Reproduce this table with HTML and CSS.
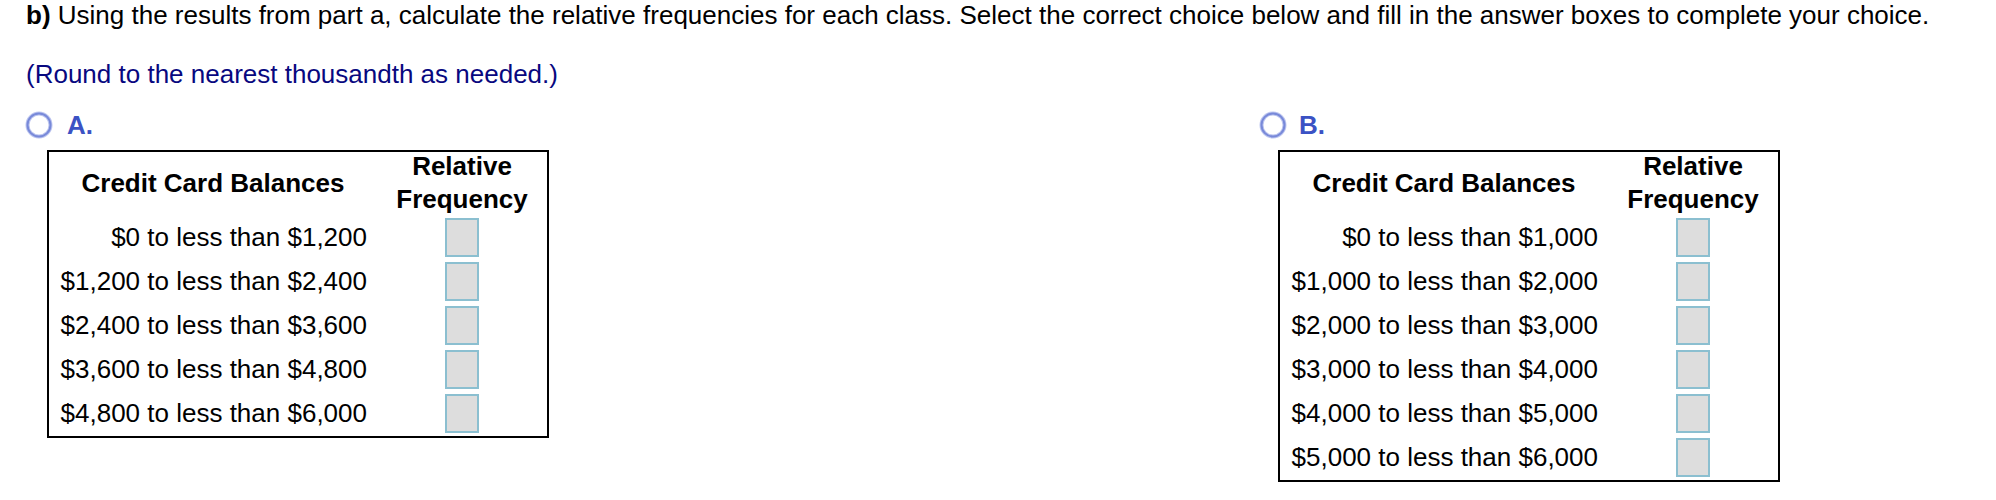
FILE: index.html
```html
<!DOCTYPE html>
<html lang="en">
<head>
<meta charset="utf-8">
<title>Relative frequencies</title>
<link rel="stylesheet" href="styles.css">
</head>
<body>
<div class="page">
  <p class="question"><b>b)</b> Using the results from part a, calculate the relative frequencies for each class. Select the correct choice below and fill in the answer boxes to complete your choice.</p>
  <p class="hint">(Round to the nearest thousandth as needed.)</p>
  <div class="choices">
    <div class="choice choice-a">
      <div class="choice-label">
        <svg class="radio" width="28" height="28" viewBox="0 0 28 28" aria-hidden="true"><circle cx="14" cy="14" r="11.5" fill="#fff" stroke="#bcc5ef" stroke-width="4"/><circle cx="14" cy="14" r="11.5" fill="none" stroke="#7889d9" stroke-width="2"/></svg>
        <span class="letter">A.</span>
      </div>
      <div class="freq-table">
        <div class="hcell hcell-left">Credit Card Balances</div>
        <div class="hcell hcell-right">Relative<br>Frequency</div>
        <div class="cls">$0 to less than $1,200</div><div class="ans"><span class="box"></span></div>
        <div class="cls">$1,200 to less than $2,400</div><div class="ans"><span class="box"></span></div>
        <div class="cls">$2,400 to less than $3,600</div><div class="ans"><span class="box"></span></div>
        <div class="cls">$3,600 to less than $4,800</div><div class="ans"><span class="box"></span></div>
        <div class="cls">$4,800 to less than $6,000</div><div class="ans"><span class="box"></span></div>
      </div>
    </div>
    <div class="choice choice-b">
      <div class="choice-label">
        <svg class="radio" width="28" height="28" viewBox="0 0 28 28" aria-hidden="true"><circle cx="14" cy="14" r="11.5" fill="#fff" stroke="#bcc5ef" stroke-width="4"/><circle cx="14" cy="14" r="11.5" fill="none" stroke="#7889d9" stroke-width="2"/></svg>
        <span class="letter">B.</span>
      </div>
      <div class="freq-table">
        <div class="hcell hcell-left">Credit Card Balances</div>
        <div class="hcell hcell-right">Relative<br>Frequency</div>
        <div class="cls">$0 to less than $1,000</div><div class="ans"><span class="box"></span></div>
        <div class="cls">$1,000 to less than $2,000</div><div class="ans"><span class="box"></span></div>
        <div class="cls">$2,000 to less than $3,000</div><div class="ans"><span class="box"></span></div>
        <div class="cls">$3,000 to less than $4,000</div><div class="ans"><span class="box"></span></div>
        <div class="cls">$4,000 to less than $5,000</div><div class="ans"><span class="box"></span></div>
        <div class="cls">$5,000 to less than $6,000</div><div class="ans"><span class="box"></span></div>
      </div>
    </div>
  </div>
</div>
</body>
</html>
```
FILE: styles.css
```css
html, body {
  margin: 0;
  padding: 0;
  background: #fff;
}

.page {
  font-family: "Liberation Sans", Arial, sans-serif;
  font-size: 26px;
  line-height: 30px;
  color: #000;
  padding: 0 0 0 26px;
}

.question {
  margin: 0;
  white-space: nowrap;
}

.hint {
  margin: 29px 0 0;
  color: #08087f;
}

.choices {
  display: flex;
  margin-top: 21px;
}

.choice-a {
  width: 1234px;
}

.choice-label {
  display: flex;
  align-items: center;
  height: 30px;
}

.radio {
  display: block;
  margin-left: -1px;
  margin-right: 14px;
}

.choice-b .radio {
  margin-right: 12px;
}

.letter {
  font-weight: bold;
  color: #3b52c4;
}

.freq-table {
  display: grid;
  grid-template-columns: 328px 170px;
  grid-auto-rows: 44px;
  grid-template-rows: 64px;
  border: 2px solid #000;
  width: 498px;
  margin: 10px 0 0 21px;
}

.choice-b .freq-table {
  margin-left: 18px;
}

.hcell {
  font-weight: bold;
  text-align: center;
}

.hcell-left {
  align-self: center;
  padding-bottom: 2px;
}

.hcell-right {
  line-height: 33px;
  margin-top: -2px;
}

.cls {
  text-align: right;
  padding-right: 10px;
  line-height: 43px;
  white-space: nowrap;
}

.ans {
  display: flex;
  justify-content: center;
  align-items: flex-start;
  padding-top: 2px;
}

.box {
  display: block;
  width: 30px;
  height: 35px;
  border: 2px solid #8bbfd0;
  background: #dddddd;
}
```
